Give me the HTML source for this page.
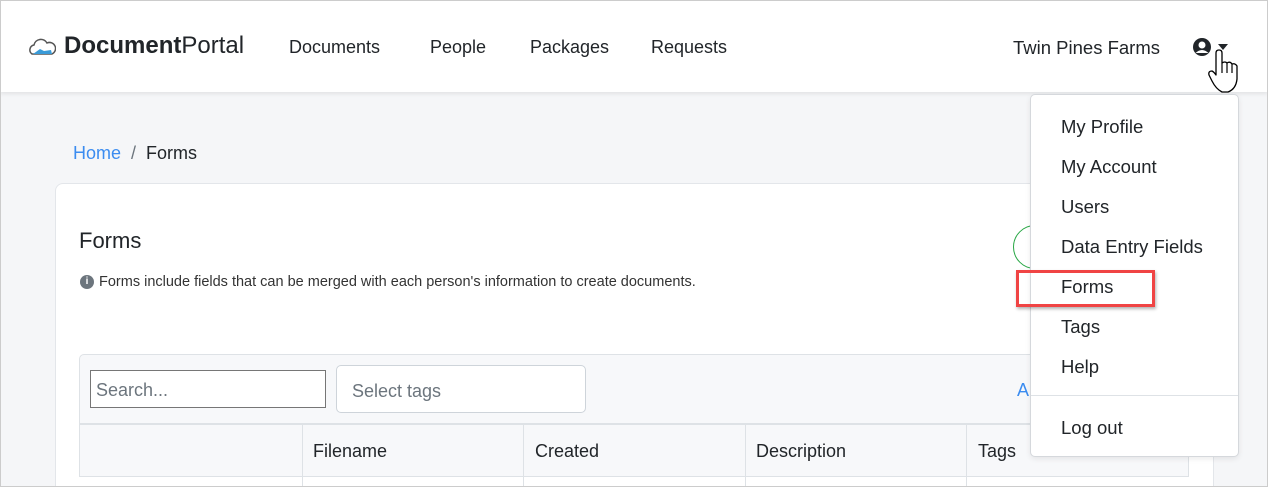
<!DOCTYPE html>
<html style="overflow:hidden"><head><style>
*{box-sizing:border-box;margin:0;padding:0}
html,body{width:1268px;height:487px;overflow:hidden}
body{background:#f5f6f8;font-family:"Liberation Sans",sans-serif;color:#212529;position:relative}
.a{position:absolute}
.nav{left:0;top:0;width:1268px;height:92px;background:#fff;box-shadow:0 2px 4px rgba(0,0,0,.08)}
.t{position:absolute;white-space:nowrap}
</style></head><body>
<div class="a nav"></div>
<svg class="a" style="left:28px;top:38px" width="28" height="18" viewBox="0 0 28 18"><path d="M4 16 A5 5 0 0 1 6 7 A7 7 0 0 1 19 5 A5 5 0 0 1 24 16 Z" fill="none" stroke="#555" stroke-width="1.5"/><path d="M5 16 L12 11 L16 13 L23 12 L24 16Z" fill="#3a9bd8"/></svg>
<div class="t" style="left:64px;top:32px;font-size:24px"><b>Document</b>Portal</div>
<div class="t" style="left:289px;top:37px;font-size:18px">Documents</div>
<div class="t" style="left:430px;top:37px;font-size:18px">People</div>
<div class="t" style="left:530px;top:37px;font-size:18px">Packages</div>
<div class="t" style="left:651px;top:37px;font-size:18px">Requests</div>
<div class="t" style="left:1013px;top:37px;font-size:18.5px">Twin Pines Farms</div>
<svg class="a" style="left:1192px;top:37px" width="50" height="58" viewBox="0 0 50 58"><circle cx="10" cy="10" r="9" fill="#212529"/><circle cx="10" cy="8" r="3.5" fill="#fff"/><path d="M3.5 16 Q10 10 16.5 16" fill="#fff"/><path d="M26 7 L36 7 L31 13Z" fill="#212529"/><path d="M24 16 Q24 13 27 13 Q30 13 30 16 L30 26 Q33 24 35 26 Q38 24 40 27 Q43 26 45 29 L45 42 Q44 52 36 55 L30 55 Q24 52 20 44 L17 38 Q16 34 20 34 Q22 35 24 38 Z" fill="#fff" stroke="#000" stroke-width="1.3" stroke-linejoin="round"/><path d="M30 26 L30 36 M35 26 L35 36 M40 27 L40 36" stroke="#000" stroke-width="1.2"/></svg>
<div class="t" style="left:73px;top:143px;font-size:18px"><span style="color:#3b8cf0">Home</span> <span style="color:#6c757d">&nbsp;/&nbsp;</span> Forms</div>
<div class="a" style="left:55px;top:183px;width:1159px;height:320px;background:#fff;border-radius:8px;border:1px solid #e3e6ea"></div>
<div class="t" style="left:79px;top:228px;font-size:22px">Forms</div>
<div class="a" style="left:80px;top:275px;width:14px;height:14px;border-radius:50%;background:#6c757d;color:#fff;font-size:10px;text-align:center;line-height:14px;font-weight:bold">i</div>
<div class="t" style="left:99px;top:274px;font-size:14.5px;color:#333">Forms include fields that can be merged with each person's information to create documents.</div>
<div class="a" style="left:1013px;top:225px;width:40px;height:44px;border:1px solid #28a745;border-radius:22px 0 0 22px"></div>
<div class="a" style="left:79px;top:354px;width:1110px;height:70px;background:#f7f8fa;border:1px solid #dee2e6;border-radius:5px 5px 0 0"></div>
<div class="a" style="left:90px;top:370px;width:236px;height:38px;background:#fff;border:1px solid #767676"></div>
<div class="t" style="left:96px;top:380px;font-size:18px;color:#6c757d">Search...</div>
<div class="a" style="left:336px;top:365px;width:250px;height:48px;background:#fff;border:1px solid #ced4da;border-radius:5px"></div>
<div class="t" style="left:352px;top:381px;font-size:18px;color:#6c757d">Select tags</div>
<div class="t" style="left:1017px;top:380px;font-size:18px;color:#3b8cf0">A</div>
<div class="a" style="left:79px;top:424px;width:1110px;height:53px;background:#f7f8fa;border:1px solid #dee2e6"></div>
<div class="a" style="left:302px;top:424px;width:1px;height:63px;background:#dee2e6"></div>
<div class="a" style="left:523px;top:424px;width:1px;height:63px;background:#dee2e6"></div>
<div class="a" style="left:745px;top:424px;width:1px;height:63px;background:#dee2e6"></div>
<div class="a" style="left:966px;top:424px;width:1px;height:63px;background:#dee2e6"></div>
<div class="t" style="left:313px;top:441px;font-size:18px">Filename</div>
<div class="t" style="left:535px;top:441px;font-size:18px">Created</div>
<div class="t" style="left:756px;top:441px;font-size:18px">Description</div>
<div class="t" style="left:978px;top:441px;font-size:18px">Tags</div>
<div class="a" style="left:1030px;top:94px;width:209px;height:363px;background:#fff;border:1px solid #d5d8dc;border-radius:5px;box-shadow:0 2px 6px rgba(0,0,0,.08)"></div>
<div class="t" style="left:1061px;top:116px;font-size:18.5px">My Profile</div>
<div class="t" style="left:1061px;top:156px;font-size:18.5px">My Account</div>
<div class="t" style="left:1061px;top:196px;font-size:18.5px">Users</div>
<div class="t" style="left:1061px;top:236px;font-size:18.5px">Data Entry Fields</div>
<div class="t" style="left:1061px;top:276px;font-size:18.5px">Forms</div>
<div class="a" style="left:1016px;top:270px;width:139px;height:37px;border:3px solid #f04444;box-shadow:1px 2px 3px rgba(0,0,0,.3)"></div>
<div class="t" style="left:1061px;top:316px;font-size:18.5px">Tags</div>
<div class="t" style="left:1061px;top:356px;font-size:18.5px">Help</div>
<div class="a" style="left:1031px;top:395px;width:207px;height:1px;background:#dee2e6"></div>
<div class="t" style="left:1061px;top:417px;font-size:18.5px">Log out</div>
<div class="a" style="left:0;top:0;width:1268px;height:487px;border:1px solid #ccc"></div>
</body></html>
